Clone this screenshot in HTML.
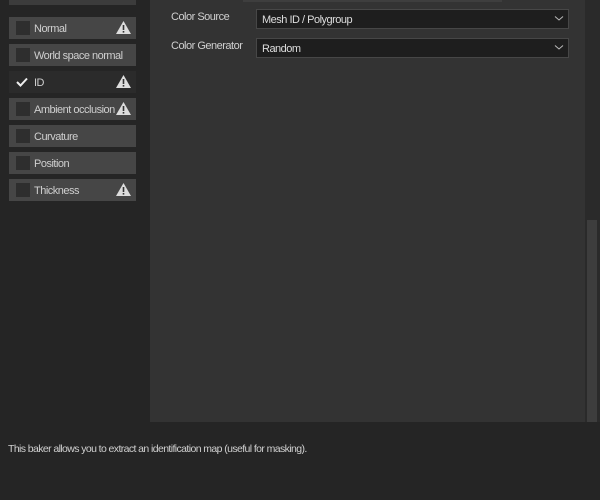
<!DOCTYPE html>
<html><head><style>
body{margin:0;width:600px;height:500px;background:#252525;position:relative;overflow:hidden;font-family:"Liberation Sans",Tahoma,sans-serif;font-size:11px;letter-spacing:-0.5px;color:#d0d0d0}
.it{position:absolute;left:9px;width:127px;height:22px;background:#464646}
.it .cb{position:absolute;left:7px;top:4px;width:14px;height:14px;background:#2e2e2e}
.it .t{position:absolute;left:25px;top:6px;color:#cfcfcf}
.it svg{position:absolute;right:4px;top:3px}
.panel{position:absolute;left:150px;top:0;width:435px;height:422px;background:#333}
.lbl{position:absolute;left:171px;color:#d0d0d0}
.dd{position:absolute;left:256px;width:311px;height:18px;background:#1e1e1e;border:1px solid #474747}
.dd span{position:absolute;left:5px;top:4px;color:#ddd}
.dd svg{position:absolute;right:4px;top:5px}
</style></head><body>
<div class="it" style="top:-16px;height:21px;background:#3c3c3c"></div>
<div class="it" style="top:17px"><div class="cb"></div><div class="t">Normal</div><svg width="17" height="15" viewBox="0 0 17 15"><path d="M8.5 1L16 14H1Z" fill="#ddd"/><rect x="7.7" y="5" width="1.6" height="5" fill="#333"/><rect x="7.7" y="11" width="1.6" height="1.6" fill="#333"/></svg></div>
<div class="it" style="top:44px"><div class="cb"></div><div class="t">World space normal</div></div>
<div class="it" style="top:71px;background:#2b2b2b"><div class="cb" style="background:#2b2b2b"></div><svg style="left:7px;top:6px;right:auto" width="12" height="10" viewBox="0 0 12 10"><path d="M1 5L4.5 8.5L11 1.5" stroke="#eee" stroke-width="2" fill="none"/></svg><div class="t">ID</div><svg width="17" height="15" viewBox="0 0 17 15"><path d="M8.5 1L16 14H1Z" fill="#ddd"/><rect x="7.7" y="5" width="1.6" height="5" fill="#333"/><rect x="7.7" y="11" width="1.6" height="1.6" fill="#333"/></svg></div>
<div class="it" style="top:98px"><div class="cb"></div><div class="t">Ambient occlusion</div><svg width="17" height="15" viewBox="0 0 17 15"><path d="M8.5 1L16 14H1Z" fill="#ddd"/><rect x="7.7" y="5" width="1.6" height="5" fill="#333"/><rect x="7.7" y="11" width="1.6" height="1.6" fill="#333"/></svg></div>
<div class="it" style="top:125px"><div class="cb"></div><div class="t">Curvature</div></div>
<div class="it" style="top:152px"><div class="cb"></div><div class="t">Position</div></div>
<div class="it" style="top:179px"><div class="cb"></div><div class="t">Thickness</div><svg width="17" height="15" viewBox="0 0 17 15"><path d="M8.5 1L16 14H1Z" fill="#ddd"/><rect x="7.7" y="5" width="1.6" height="5" fill="#333"/><rect x="7.7" y="11" width="1.6" height="1.6" fill="#333"/></svg></div>
<div class="panel"></div>
<div style="position:absolute;left:243px;top:0;width:259px;height:2px;background:#3e3e3e"></div>
<div style="position:absolute;left:585px;top:0;width:15px;height:422px;background:#2a2a2a"></div>
<div style="position:absolute;left:587px;top:220px;width:10px;height:202px;background:#3d3d3d"></div>
<div class="lbl" style="top:11px">Color Source</div>
<div class="dd" style="top:9px"><span>Mesh ID / Polygroup</span><svg width="10" height="7" viewBox="0 0 10 7"><path d="M1 1.5L5 5L9 1.5" stroke="#bbb" fill="none"/></svg></div>
<div class="lbl" style="top:40px">Color Generator</div>
<div class="dd" style="top:38px"><span>Random</span><svg width="10" height="7" viewBox="0 0 10 7"><path d="M1 1.5L5 5L9 1.5" stroke="#bbb" fill="none"/></svg></div>
<div style="position:absolute;left:8px;top:443px;color:#d0d0d0;font-size:10.5px;letter-spacing:-0.6px">This baker allows you to extract an identification map (useful for masking).</div>
</body></html>
